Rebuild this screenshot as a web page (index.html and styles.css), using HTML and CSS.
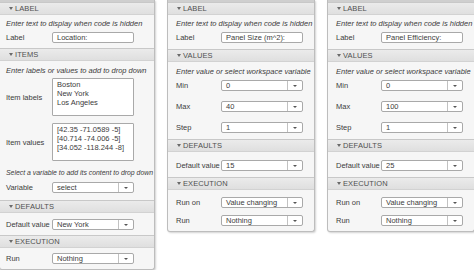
FILE: index.html
```html
<!DOCTYPE html>
<html>
<head>
<meta charset="utf-8">
<link rel="stylesheet" href="styles.css">
</head>
<body>
<div class="stage">
  <section class="panel p1">
    <div class="topbar"></div>
    <div class="hdr"><span class="tri"></span>LABEL</div>
    <div class="body sec-label">
      <div class="desc">Enter text to display when code is hidden</div>
      <div class="row first"><span class="lbl">Label</span><div class="field">Location:</div></div>
    </div>
    <div class="hdr"><span class="tri"></span>ITEMS</div>
    <div class="body sec-items">
      <div class="desc">Enter labels or values to add to drop down</div>
      <div class="row"><span class="lbl">Item labels</span><div class="area">Boston<br>New York<br>Los Angeles</div></div>
      <div class="row area2"><span class="lbl">Item values</span><div class="area">[42.35 -71.0589 -5]<br>[40.714 -74.006 -5]<br>[34.052 -118.244 -8]</div></div>
      <div class="desc desc2">Select a variable to add its content to drop down</div>
      <div class="row var"><span class="lbl">Variable</span><div class="field dd"><span class="val">select</span><span class="arrow"><i></i></span></div></div>
    </div>
    <div class="hdr"><span class="tri"></span>DEFAULTS</div>
    <div class="body sec-def">
      <div class="row"><span class="lbl">Default value</span><div class="field dd"><span class="val">New York</span><span class="arrow"><i></i></span></div></div>
    </div>
    <div class="hdr"><span class="tri"></span>EXECUTION</div>
    <div class="body sec-exe">
      <div class="row"><span class="lbl">Run</span><div class="field dd"><span class="val">Nothing</span><span class="arrow"><i></i></span></div></div>
    </div>
  </section>

  <section class="panel p2">
    <div class="topbar"></div>
    <div class="hdr"><span class="tri"></span>LABEL</div>
    <div class="body sec-label">
      <div class="desc">Enter text to display when code is hidden</div>
      <div class="row first"><span class="lbl">Label</span><div class="field">Panel Size (m^2):</div></div>
    </div>
    <div class="hdr"><span class="tri"></span>VALUES</div>
    <div class="body sec-values">
      <div class="desc">Enter value or select workspace variable</div>
      <div class="rows">
        <div class="row"><span class="lbl">Min</span><div class="field dd"><span class="val">0</span><span class="arrow"><i></i></span></div></div>
        <div class="row"><span class="lbl">Max</span><div class="field dd"><span class="val">40</span><span class="arrow"><i></i></span></div></div>
        <div class="row"><span class="lbl">Step</span><div class="field dd"><span class="val">1</span><span class="arrow"><i></i></span></div></div>
      </div>
    </div>
    <div class="hdr"><span class="tri"></span>DEFAULTS</div>
    <div class="body sec-def">
      <div class="row"><span class="lbl">Default value</span><div class="field dd"><span class="val">15</span><span class="arrow"><i></i></span></div></div>
    </div>
    <div class="hdr"><span class="tri"></span>EXECUTION</div>
    <div class="body sec-exe">
      <div class="row"><span class="lbl">Run on</span><div class="field dd"><span class="val">Value changing</span><span class="arrow"><i></i></span></div></div>
      <div class="row"><span class="lbl">Run</span><div class="field dd"><span class="val">Nothing</span><span class="arrow"><i></i></span></div></div>
    </div>
  </section>

  <section class="panel p3">
    <div class="topbar"></div>
    <div class="hdr"><span class="tri"></span>LABEL</div>
    <div class="body sec-label">
      <div class="desc">Enter text to display when code is hidden</div>
      <div class="row first"><span class="lbl">Label</span><div class="field">Panel Efficiency:</div></div>
    </div>
    <div class="hdr"><span class="tri"></span>VALUES</div>
    <div class="body sec-values">
      <div class="desc">Enter value or select workspace variable</div>
      <div class="rows">
        <div class="row"><span class="lbl">Min</span><div class="field dd"><span class="val">0</span><span class="arrow"><i></i></span></div></div>
        <div class="row"><span class="lbl">Max</span><div class="field dd"><span class="val">100</span><span class="arrow"><i></i></span></div></div>
        <div class="row"><span class="lbl">Step</span><div class="field dd"><span class="val">1</span><span class="arrow"><i></i></span></div></div>
      </div>
    </div>
    <div class="hdr"><span class="tri"></span>DEFAULTS</div>
    <div class="body sec-def">
      <div class="row"><span class="lbl">Default value</span><div class="field dd"><span class="val">25</span><span class="arrow"><i></i></span></div></div>
    </div>
    <div class="hdr"><span class="tri"></span>EXECUTION</div>
    <div class="body sec-exe">
      <div class="row"><span class="lbl">Run on</span><div class="field dd"><span class="val">Value changing</span><span class="arrow"><i></i></span></div></div>
      <div class="row"><span class="lbl">Run</span><div class="field dd"><span class="val">Nothing</span><span class="arrow"><i></i></span></div></div>
    </div>
  </section>
</div>
</body>
</html>
```

FILE: styles.css
```css
html, body {
  margin: 0;
  padding: 0;
  background: #ffffff;
  overflow: hidden;
}
body {
  font-family: "Liberation Sans", Arial, sans-serif;
  color: #3c3c3c;
  font-size: 7.5px;
}
.stage {
  display: flex;
  align-items: flex-start;
  gap: 12px;
  margin-left: -1px;
  width: 480px;
}
.panel {
  box-sizing: border-box;
  flex: none;
  background: #f6f6f6;
  border: 1px solid #bdbdbd;
  border-top: none;
  border-radius: 0 0 3px 3px;
  box-shadow: 1px 1px 2px rgba(0, 0, 0, 0.18);
  overflow: hidden;
}
.p1 { width: 156px; }
.p2, .p3 { width: 148px; }

.topbar {
  height: 2px;
  background: #cfcfcf;
}
.hdr {
  box-sizing: border-box;
  height: 13px;
  border-top: 1px solid #c8c8c8;
  border-bottom: 1px solid #d2d2d2;
  background: linear-gradient(#ebebeb, #dfdfdf);
  display: flex;
  align-items: center;
  padding-left: 9px;
  font-size: 7.5px;
  color: #505050;
  letter-spacing: 0.1px;
}
.tri {
  width: 0;
  height: 0;
  border-left: 2.5px solid transparent;
  border-right: 2.5px solid transparent;
  border-top: 3px solid #6a6a6a;
  margin-right: 2px;
}

.body {
  display: flex;
  flex-direction: column;
}
.p1 .body { padding-left: 6px; }
.p2 .body, .p3 .body { padding-left: 8px; }

.desc {
  height: 15px;
  line-height: 15px;
  font-style: italic;
  white-space: nowrap;
  color: #3c3c3c;
}
.desc2 {
  font-size: 6.9px;
}

.row {
  display: flex;
  align-items: center;
}
.lbl {
  flex: none;
  white-space: nowrap;
  color: #3c3c3c;
}
.p1 .lbl { width: 46px; }
.p2 .lbl, .p3 .lbl { width: 45px; }

.field {
  box-sizing: border-box;
  width: 82px;
  height: 11px;
  background: #ffffff;
  border: 1px solid #a9a9a9;
  border-radius: 2px;
  display: flex;
  align-items: center;
  padding-left: 4px;
  white-space: nowrap;
  color: #3c3c3c;
  line-height: 9px;
}
.field.dd { padding-left: 0; }
.field .val {
  flex: 1;
  padding-left: 4px;
}
.field .arrow {
  width: 14px;
  align-self: stretch;
  border-left: 1px solid #c2c2c2;
  display: flex;
  align-items: center;
  justify-content: center;
}
.field .arrow i {
  width: 0;
  height: 0;
  border-left: 2px solid transparent;
  border-right: 2px solid transparent;
  border-top: 2.5px solid #555;
}

.area {
  box-sizing: border-box;
  width: 82px;
  height: 38px;
  background: #ffffff;
  border: 1px solid #a9a9a9;
  border-radius: 1px;
  padding: 1px 0 0 4px;
  line-height: 9px;
  white-space: nowrap;
  overflow: hidden;
  color: #3c3c3c;
}

/* section spacing */
.sec-label { padding-top: 1px; }
.sec-label .row.first { margin-top: 1px; }
.p1 .sec-label { padding-bottom: 5px; }
.p2 .sec-label, .p3 .sec-label { padding-bottom: 6px; }

.sec-items { padding-top: 2px; padding-bottom: 7px; }
.sec-items .area2 { margin-top: 7px; }
.sec-items .desc2 { margin-top: 4px; }
.sec-items .var { margin-top: 2px; }

.sec-values { padding-top: 2px; padding-bottom: 6px; }
.sec-values .rows {
  display: flex;
  flex-direction: column;
  gap: 10px;
  margin-top: 1px;
}

.p1 .sec-def { padding-top: 6px; padding-bottom: 5px; }
.p1 .sec-exe { padding-top: 5px; padding-bottom: 5px; }

.p2 .sec-def, .p3 .sec-def { padding-top: 8px; padding-bottom: 6px; }
.p2 .sec-exe, .p3 .sec-exe { padding-top: 7px; padding-bottom: 5px; gap: 7px; }
```
